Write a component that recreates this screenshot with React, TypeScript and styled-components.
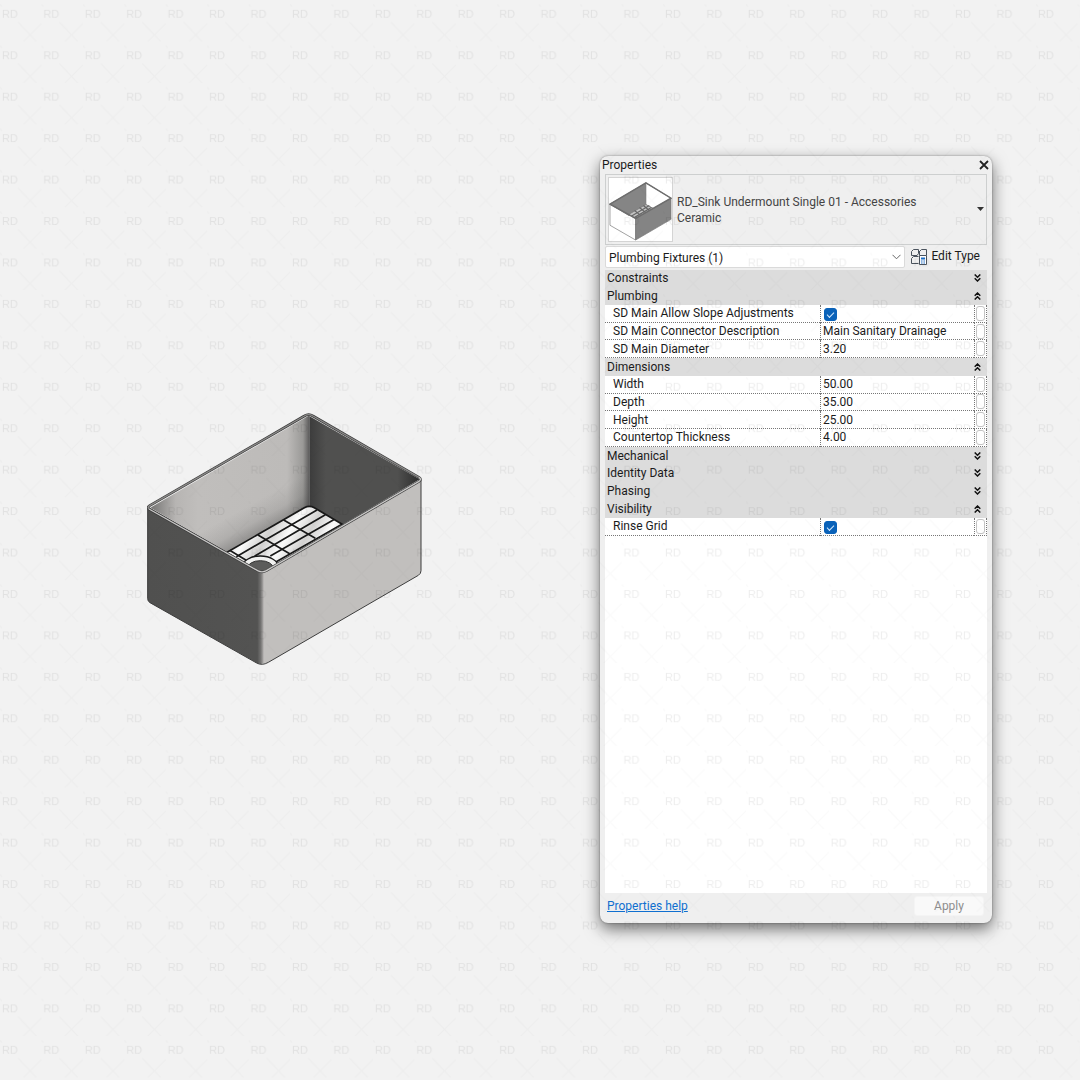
import React, { useState } from "react";
import styled, { createGlobalStyle } from "styled-components";

const GlobalStyle = createGlobalStyle`
  *, *::before, *::after { box-sizing: border-box; }
  body { margin: 0; background: #f2f2f2; }
  body, button, input, select {
    font-family: Roboto, "Open Sans", "Liberation Sans", sans-serif;
    font-size: 12px;
    line-height: 16px;
    color: #1b1b1b;
  }
`;

const Stage = styled.main`
  position: relative;
  display: grid;
  grid-template-columns: minmax(0, 1fr) 392px;
  column-gap: 32px;
  align-items: center;
  min-height: 100vh;
  padding: 24px 88px 26px 0;
  overflow: hidden;
`;

const Watermark = styled.svg`
  position: absolute;
  inset: 0;
  width: 100%;
  height: 100%;
  pointer-events: none;
`;

const Viewer = styled.section`
  display: flex;
  justify-content: center;
`;

const SinkArt = styled.svg`
  width: 275px;
  max-width: 80%;
`;

const Panel = styled.section`
  display: flex;
  flex-direction: column;
  min-height: 767px;
  padding: 0 5px;
  border-radius: 8px;
  background: #efefef;
  box-shadow: 0 0 2px rgba(0, 0, 0, 0.4), 0 6px 16px rgba(0, 0, 0, 0.55);
`;

const TitleBar = styled.header`
  display: flex;
  align-items: center;
  justify-content: space-between;
  height: 18px;
  margin: 0 -2px 0 -3px;
`;

const Title = styled.h1`
  margin: 0;
  font-size: 12px;
  font-weight: 400;
`;

const CloseButton = styled.button`
  display: flex;
  padding: 0;
  border: 0;
  background: none;
`;

const TypeSelector = styled.button`
  display: flex;
  align-items: center;
  gap: 4px;
  height: 71px;
  padding: 2px;
  border: 1px solid #cdcfcf;
  background: #efefef;
  text-align: left;
  color: #444;
`;

const Thumbnail = styled.svg`
  flex: none;
  width: 65px;
  height: 65px;
  border: 1px solid #d4d4d4;
  background: #fff;
`;

const TypeName = styled.span`
  display: flex;
  flex: 1;
  flex-direction: column;
  padding-top: 2px;
`;

const FilterRow = styled.div`
  display: flex;
  gap: 6px;
  align-items: center;
  height: 25px;
`;

const SelectWrap = styled.div`
  display: grid;
  flex: 1;
  align-items: center;

  > * { grid-area: 1 / 1; }
  > svg { justify-self: end; margin-right: 4px; pointer-events: none; }
`;

const Select = styled.select`
  appearance: none;
  width: 100%;
  height: 22px;
  padding: 1px 20px 0 3px;
  border: 1px solid #dadada;
  border-radius: 2px;
  background: #fff;
`;

const EditTypeButton = styled.button`
  display: flex;
  align-items: center;
  gap: 3px;
  padding: 0 7px 2px 0;
  border: 0;
  background: none;
`;

const Sheet = styled.div`
  flex: 1;
  background: #fff;
`;

const PropertyTable = styled.table`
  width: 100%;
  table-layout: fixed;
  border-spacing: 0;

  td, th { height: 17px; padding: 0; font-weight: 400; text-align: left; }
`;

const GroupCell = styled.th`
  background: #dcdcdc;
`;

const GroupToggle = styled.button`
  display: flex;
  align-items: center;
  justify-content: space-between;
  width: 100%;
  padding: 0 6px 0 2px;
  border: 0;
  background: none;
`;

const NameCell = styled.th`
  border-bottom: 1px dotted #777;

  label { display: block; padding-left: 8px; }
`;

const ValueCell = styled.td`
  border-bottom: 1px dotted #777;
  border-left: 1px dotted #777;
`;

const LinkCell = styled.td`
  border: 1px dotted #777;
  border-top: 0;
`;

const ValueInput = styled.input`
  display: block;
  width: 100%;
  height: 16px;
  padding: 0 2px;
  border: 0;
  background: none;
`;

const CheckBox = styled.input`
  appearance: none;
  display: block;
  width: 13px;
  height: 13px;
  margin: 2px 0 0 3px;
  border: 1px solid #0a62b9;
  border-radius: 3px;
  background: #fff;

  &:checked { background: #0a62b9; }
  &:checked::after {
    content: "";
    display: block;
    width: 7px;
    height: 4px;
    margin: 3px 2px;
    border: solid #d6ebff;
    border-width: 0 0 1px 1px;
    transform: rotate(-45deg);
  }
`;

const LinkButton = styled.button`
  display: block;
  width: 9px;
  height: 15px;
  margin: 0 auto;
  padding: 0;
  border: 1px solid #c4c4c4;
  border-radius: 3px;
  background: #fff;
`;

const Footer = styled.footer`
  display: flex;
  align-items: center;
  justify-content: space-between;
  height: 30px;
  padding: 0 3px 4px 2px;
`;

const HelpLink = styled.a`
  color: #0f6fd0;
`;

const ApplyButton = styled.button`
  width: 70px;
  height: 20px;
  padding: 0;
  border: 1px solid #f4f4f4;
  border-radius: 3px;
  background: #f9f9f9;
  color: #8e8e8e;
`;

type Property = { name: string; value: string | boolean };
type Group = { name: string; open: boolean; items: Property[] };

const groups: Group[] = [
  { name: "Constraints", open: false, items: [] },
  {
    name: "Plumbing",
    open: true,
    items: [
      { name: "SD Main Allow Slope Adjustments", value: true },
      { name: "SD Main Connector Description", value: "Main Sanitary Drainage" },
      { name: "SD Main Diameter", value: "3.20" },
    ],
  },
  {
    name: "Dimensions",
    open: true,
    items: [
      { name: "Width", value: "50.00" },
      { name: "Depth", value: "35.00" },
      { name: "Height", value: "25.00" },
      { name: "Countertop Thickness", value: "4.00" },
    ],
  },
  { name: "Mechanical", open: false, items: [] },
  { name: "Identity Data", open: false, items: [] },
  { name: "Phasing", open: false, items: [] },
  { name: "Visibility", open: true, items: [{ name: "Rinse Grid", value: true }] },
];

function DoubleChevron({ up }: { up: boolean }) {
  return (
    <svg width="7" height="8" viewBox="0 0 7 8" fill="none" stroke="#111" strokeWidth="1.5" aria-hidden="true">
      <path d={up ? "M.7 3.7 3.5 1l2.8 2.7M.7 7.5l2.8-2.7 2.8 2.7" : "M.7.5l2.8 2.7L6.3.5M.7 4.3 3.5 7l2.8-2.7"} />
    </svg>
  );
}

function Sink() {
  return (
    <SinkArt viewBox="50 38 825 762" role="img" aria-label="Undermount sink">
      <defs>
        <clipPath id="opening">
          <path d="M60 325 535 49 868 240 395 518Z" />
        </clipPath>
        <linearGradient id="outerLeft" x1="52" x2="402" y1="0" y2="0" gradientUnits="userSpaceOnUse">
          <stop offset="0" stopColor="#50504f" />
          <stop offset=".94" stopColor="#535352" />
          <stop offset=".97" stopColor="#757473" />
          <stop offset="1" stopColor="#c1bfbd" />
        </linearGradient>
        <linearGradient id="wallLight" x1="60" x2="537" y1="0" y2="0" gradientUnits="userSpaceOnUse">
          <stop offset="0" stopColor="#757473" />
          <stop offset=".16" stopColor="#b7b5b3" />
          <stop offset=".3" stopColor="#c0bebc" />
          <stop offset=".86" stopColor="#bdbbb9" />
          <stop offset=".96" stopColor="#9a9997" />
          <stop offset="1" stopColor="#5c5b5b" />
        </linearGradient>
        <linearGradient id="wallFoot" x1="370" x2="420" y1="310" y2="400" gradientUnits="userSpaceOnUse">
          <stop offset="0" stopColor="#444" stopOpacity="0" />
          <stop offset=".5" stopColor="#444" stopOpacity=".12" />
          <stop offset="1" stopColor="#444" stopOpacity=".45" />
        </linearGradient>
        <linearGradient id="wallDark" x1="537" x2="868" y1="0" y2="0" gradientUnits="userSpaceOnUse">
          <stop offset="0" stopColor="#3c3c3c" />
          <stop offset=".15" stopColor="#50504f" />
          <stop offset=".8" stopColor="#50504f" />
          <stop offset="1" stopColor="#2c2c2c" />
        </linearGradient>
        <linearGradient id="floor" x1="0" x2="44" y1="0" y2="26" gradientUnits="userSpaceOnUse" spreadMethod="reflect">
          <stop offset="0" stopColor="#fafafa" />
          <stop offset="1" stopColor="#d2d1d0" />
        </linearGradient>
      </defs>
      <path d="M52 322V598q0 8 7 12l320 181q10 5 23 1V520Z" fill="url(#outerLeft)" />
      <path d="M400 516 872 242V514q0 9-8 14L414 789q-5 3-14 4Z" fill="#c1bfbd" />
      <path d="M52 322V598q0 8 7 12l320 181q16 9 35-2L864 528q8-5 8-14V242" fill="none" stroke="#3d3d3d" strokeWidth="3" />
      <g clipPath="url(#opening)">
        <path d="M50 325 537 45V322L270 475Z" fill="url(#wallLight)" />
        <path d="M50 325 537 45V322L270 475Z" fill="url(#wallFoot)" />
        <path d="M537 45 875 240 635 378 537 320Z" fill="url(#wallDark)" />
        <path d="M537 320 640 378 395 520 285 461Z" fill="#d3d2d0" />
        <path d="M524 325q14-7 27 0l82 48L395 515l-105-56Z" fill="url(#floor)" />
        <g fill="none" stroke="#191919" strokeWidth="5">
          <path d="M285 462 522 325q15-8 30 0l86 51" />
          <path d="M560 332 318 472M585 346 345 487M610 361 420 470M635 375 430 492" />
          <path d="M460 362 555 417M383 407 478 463M298 453 350 484" />
        </g>
        <ellipse cx="390" cy="503" rx="54" ry="33" fill="#f1f1f0" stroke="#191919" strokeWidth="4" />
        <ellipse cx="390" cy="507" rx="39" ry="23" fill="#5c5c5b" stroke="#333" strokeWidth="3" />
      </g>
      <g fill="none" strokeLinejoin="round">
        <path d="M56 329q-6-5 2-10L522 50q13-8 26 0L866 234q9 6 0 12L408 514q-13 7-26 0Z" stroke="#3b3b3b" strokeWidth="8" />
        <path d="M56 329q-6-5 2-10L522 50q13-8 26 0L866 234" stroke="#8b8a89" strokeWidth="4" />
        <path d="M866 234q9 6 0 12L408 514q-13 7-26 0L56 329" stroke="#c9c8c7" strokeWidth="4" />
      </g>
    </SinkArt>
  );
}

function TypePreview() {
  return (
    <Thumbnail viewBox="0 0 64 64" aria-hidden="true">
      <g stroke="#777" strokeWidth=".7" strokeLinejoin="round">
        <path d="M1 26.500 27 41v22L1 48Z" fill="#fff" />
        <path d="M27 41 63 20.500V42L27 63Z" fill="#848484" />
        <path d="M1 26.500 37.500 5v23L20 38Z" fill="#858585" />
        <path d="M37.500 5 63 20.500 45 31l-7.500-4Z" fill="#fff" />
        <path d="M37.500 27 45 31 27 41l-7-4Z" fill="#c4c4c4" />
      </g>
      <path d="M23 38.500 41 28M26 40l17-10M26 33l6 5M31 30l6 5M35 28l6 5" stroke="#666" strokeWidth="1.200" />
      <path d="M1 26.500 37.500 5 63 20.500 27 41Z" fill="none" stroke="#6d6d6d" strokeWidth="1.500" />
    </Thumbnail>
  );
}

function EditTypeIcon() {
  return (
    <svg width="17" height="17" viewBox="0 0 17 17" fill="none" stroke="#4a535d" aria-hidden="true">
      <path d="M.5 3.500 2.500 1.500h5v4l-1.500 2H.5ZM8.500 3.500l2-2h5v6M8.500 3v4.500M.5 10.500l2-2h5M.5 10.500v5h7" />
      <path d="M8.500 7.500h7v9h-7Z" fill="#fff" />
      <path d="M10 9.500h4v2h-4Z" fill="#1c6fc9" stroke="none" />
      <path d="M10 13h1.500M12.500 13H14M10 15h1.500M12.500 15H14" stroke="#1c6fc9" />
    </svg>
  );
}

function PropertyRow({ item }: { item: Property }) {
  const id = item.name.toLowerCase().replace(/ /g, "-");
  return (
    <tr>
      <NameCell scope="row">
        <label htmlFor={id}>{item.name}</label>
      </NameCell>
      <ValueCell>
        {typeof item.value === "boolean" ? (
          <CheckBox id={id} type="checkbox" defaultChecked={item.value} />
        ) : (
          <ValueInput id={id} type="text" defaultValue={item.value} />
        )}
      </ValueCell>
      <LinkCell>
        <LinkButton type="button" aria-label={`Associate ${item.name}`} />
      </LinkCell>
    </tr>
  );
}

export default function App() {
  const [open, setOpen] = useState(() => groups.map((group) => group.open));
  const toggle = (index: number) => setOpen(open.map((value, i) => (i === index ? !value : value)));
  const rowCount = groups.reduce((sum, group, i) => sum + 1 + (open[i] ? group.items.length : 0), 0);

  return (
    <>
      <GlobalStyle />
      <Stage>
        <Viewer>
          <Sink />
        </Viewer>
        <Panel aria-label="Properties">
          <TitleBar>
            <Title>Properties</Title>
            <CloseButton type="button" aria-label="Close">
              <svg width="10" height="10" viewBox="0 0 10 10" stroke="#222" strokeWidth="1.800">
                <path d="M1 1l8 8M9 1 1 9" />
              </svg>
            </CloseButton>
          </TitleBar>
          <TypeSelector type="button">
            <TypePreview />
            <TypeName>
              <span>RD_Sink Undermount Single 01 - Accessories</span>
              <span>Ceramic</span>
            </TypeName>
            <svg width="7" height="4" viewBox="0 0 7 4" fill="#333" aria-hidden="true">
              <path d="M0 0h7L3.500 4Z" />
            </svg>
          </TypeSelector>
          <FilterRow>
            <SelectWrap>
              <Select aria-label="Category filter" defaultValue="fixtures">
                <option value="fixtures">Plumbing Fixtures (1)</option>
              </Select>
              <svg width="9" height="6" viewBox="0 0 9 6" fill="none" stroke="#666" aria-hidden="true">
                <path d="M.5.8l4 4 4-4" />
              </svg>
            </SelectWrap>
            <EditTypeButton type="button">
              <EditTypeIcon />
              Edit Type
            </EditTypeButton>
          </FilterRow>
          <Sheet>
            <PropertyTable style={{ height: Math.round((rowCount * 266) / 15) }}>
              <colgroup>
                <col />
                <col width="154" />
                <col width="13" />
              </colgroup>
              <tbody>
                {groups.map((group, i) => (
                  <React.Fragment key={group.name}>
                    <tr>
                      <GroupCell colSpan={3}>
                        <GroupToggle type="button" aria-expanded={open[i]} onClick={() => toggle(i)}>
                          {group.name}
                          <DoubleChevron up={open[i]} />
                        </GroupToggle>
                      </GroupCell>
                    </tr>
                    {open[i] && group.items.map((item) => <PropertyRow key={item.name} item={item} />)}
                  </React.Fragment>
                ))}
              </tbody>
            </PropertyTable>
          </Sheet>
          <Footer>
            <HelpLink href="#help">Properties help</HelpLink>
            <ApplyButton type="button" disabled>
              Apply
            </ApplyButton>
          </Footer>
        </Panel>
        <Watermark aria-hidden="true">
          <defs>
            <pattern id="marks" width="41.440" height="41.440" patternUnits="userSpaceOnUse">
              <text x="2" y="18" fontSize="11" fontFamily="Liberation Sans, sans-serif" fill="#000" fillOpacity=".07">
                RD
              </text>
              <path d="M18 22 41.440 47M43 22 18 47M-2 2.500 2 6.500" stroke="#000" strokeOpacity=".02" fill="none" />
            </pattern>
          </defs>
          <rect width="100%" height="100%" fill="url(#marks)" />
        </Watermark>
      </Stage>
    </>
  );
}
